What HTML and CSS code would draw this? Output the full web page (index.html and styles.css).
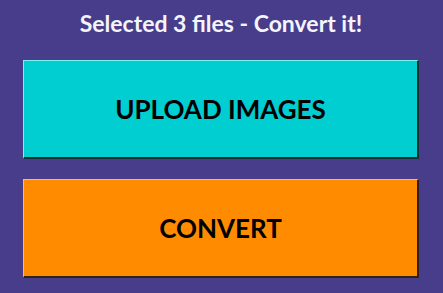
FILE: index.html
```html
<!DOCTYPE html>
<html>
<head>
<meta charset="utf-8">
<link rel="stylesheet" href="styles.css">
</head>
<body>
<div class="app">
  <h1 class="title">Selected 3 files - Convert it!</h1>
  <button class="btn btn-upload">UPLOAD IMAGES</button>
  <button class="btn btn-convert">CONVERT</button>
</div>
</body>
</html>
```
FILE: styles.css
```css
html, body {
  margin: 0;
  padding: 0;
  background: #483d8b;
  width: 443px;
  height: 293px;
  overflow: hidden;
}
.app {
  display: flex;
  flex-direction: column;
  align-items: flex-start;
  padding: 0 24px 0 23px;
  font-family: Lato, "Open Sans", sans-serif;
}
.title {
  margin: 0;
  align-self: stretch;
  text-align: center;
  color: #f4f4fa;
  font-size: 23px;
  font-weight: 700;
  height: 60px;
  line-height: 47px;
}
.btn {
  width: 396px;
  height: 99px;
  margin: 0 0 20px 0;
  padding: 0;
  font-family: Lato, "Open Sans", sans-serif;
  font-size: 26px;
  font-weight: 700;
  color: #000;
  border-style: solid;
  border-width: 1px 2px 2px 1px;
  cursor: pointer;
}
.btn-upload {
  background: #00ced1;
  border-color: #7ff0f0 #103030 #103030 #7ff0f0;
}
.btn-convert {
  background: #ff8c00;
  border-color: #ffb870 #302010 #302010 #ffb870;
}
```
